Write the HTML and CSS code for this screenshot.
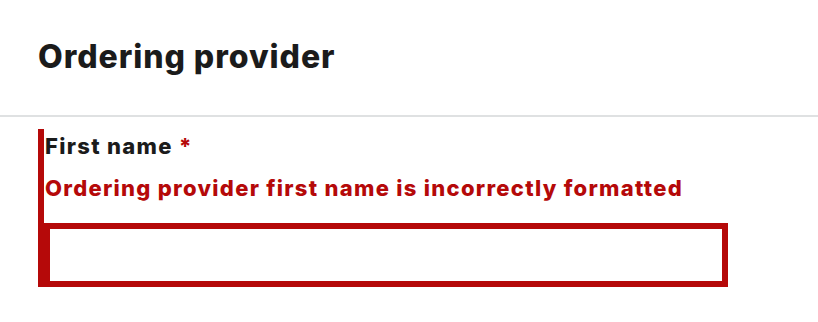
FILE: index.html
```html
<!DOCTYPE html>
<html lang="en">
<head>
<meta charset="utf-8">
<title>Ordering provider</title>
<link rel="stylesheet" href="styles.css">
</head>
<body>
<section class="card">
  <header class="card-header">
    <h2 class="card-title">Ordering provider</h2>
  </header>
  <div class="card-body">
    <div class="form-group form-group--error">
      <label class="form-label" for="first-name">First name <abbr class="required" title="required">*</abbr></label>
      <span class="error-message" id="first-name-error">Ordering provider first name is incorrectly formatted</span>
      <input class="text-input text-input--error" id="first-name" name="first-name" type="text" aria-describedby="first-name-error">
    </div>
  </div>
</section>
</body>
</html>
```
FILE: styles.css
```css
html, body {
  margin: 0;
  padding: 0;
  background: #ffffff;
}

body {
  font-family: "Inter", "Noto Sans", "Liberation Sans", sans-serif;
  color: #1b1b1b;
}

.card {
  width: 818px;
  height: 322px;
  background: #ffffff;
  border-top-left-radius: 2px;
}

.card-header {
  padding: 37px 38px 38px;
  border-bottom: 2px solid #dfe1e2;
}

.card-title {
  margin: 0;
  font-size: 32px;
  line-height: 40px;
  font-weight: 800;
  letter-spacing: 0.95px;
  color: #1b1b1b;
}

.card-body {
  padding: 12px 38px 0;
}

.form-group {
  display: flex;
  flex-direction: column;
  align-items: flex-start;
}

.form-group--error {
  border-left: 6px solid #b50909;
}

.form-label {
  display: block;
  margin-top: 3px;
  padding-left: 1px;
  font-size: 22px;
  line-height: 28px;
  font-weight: 800;
  letter-spacing: 1.3px;
  color: #1b1b1b;
}

.required {
  color: #b50909;
  text-decoration: none;
  border: 0;
}

.error-message {
  display: block;
  margin-top: 14px;
  padding-left: 1px;
  font-size: 22px;
  line-height: 28px;
  font-weight: 800;
  letter-spacing: 1.28px;
  color: #b50909;
}

.text-input {
  box-sizing: border-box;
  margin: 21px 0 0;
  width: 684px;
  height: 64px;
  padding: 0 12px;
  background: #ffffff;
  border: 6px solid #b50909;
  border-radius: 0;
  font: inherit;
  outline: none;
}
```
